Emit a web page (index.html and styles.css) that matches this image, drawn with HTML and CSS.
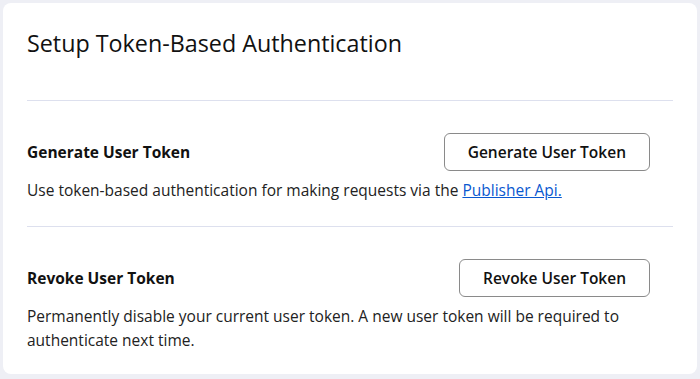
FILE: index.html
```html
<!DOCTYPE html>
<html lang="en">
<head>
  <meta charset="UTF-8" />
  <meta name="viewport" content="width=device-width, initial-scale=1.0"/>
  <title>Token-Based Authentication</title>
  <link rel="stylesheet" href="styles.css">
</head>
<body>
  <div class="card">
    <div class="card-header">
      <h1>Setup Token-Based Authentication</h1>
    </div>

    <div class="section">
      <div class="row">
        <h2>Generate User Token</h2>
        <button class="btn">Generate User Token</button>
      </div>
      <p>Use token-based authentication for making requests via the <a href="#">Publisher Api.</a></p>
    </div>

    <div class="section">
      <div class="row">
        <h2>Revoke User Token</h2>
        <button class="btn">Revoke User Token</button>
      </div>
      <p>Permanently disable your current user token. A new user token will be required to authenticate next time.</p>
    </div>
  </div>
</body>
</html>
```

FILE: styles.css
```css
body {
  margin: 0;
  padding: 3px;
  background: #eeeff5;
  font-family: 'Open Sans', sans-serif;
  color: #111;
}

.card {
  background: #fff;
  border-radius: 8px;
  padding: 0 24px;
}

.card-header {
  height: 98px;
  border-bottom: 1px solid #dde0ee;
  box-sizing: border-box;
  padding-top: 25px;
}

h1 {
  margin: 0;
  font-size: 23.3px;
  font-weight: 400;
  line-height: 30px;
}

.section {
  padding: 32px 0 24px;
  border-bottom: 1px solid #dde0ee;
}

.section:last-child {
  border-bottom: none;
  padding-bottom: 22px;
}

.row {
  display: flex;
  align-items: center;
  justify-content: space-between;
  padding-right: 23px;
}

h2 {
  margin: 0;
  font-size: 15.5px;
  font-weight: 700;
}

.btn {
  height: 38px;
  padding: 0 23px;
  font-family: inherit;
  font-size: 15.5px;
  font-weight: 600;
  color: #111;
  background: #fff;
  border: 1px solid #8a8a8a;
  border-radius: 6px;
  cursor: pointer;
}

p {
  margin: 7px 0 0;
  font-size: 15.5px;
  line-height: 24px;
  color: #222;
}

a {
  color: #0a58d0;
}
```
